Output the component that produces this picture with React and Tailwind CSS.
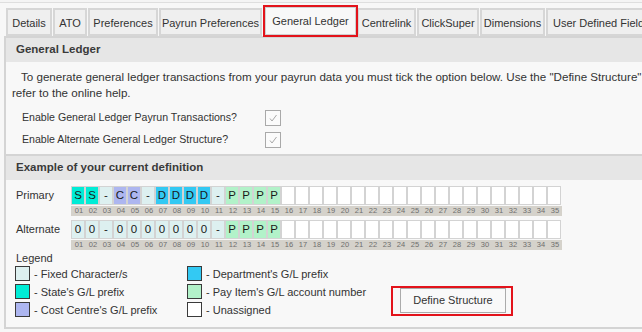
import React from 'react';

const tabs = [
  { label: 'Details', w: 46 },
  { label: 'ATO', w: 34 },
  { label: 'Preferences', w: 70 },
  { label: 'Payrun Preferences', w: 103 },
  { label: 'General Ledger', w: 91, active: true },
  { label: 'Centrelink', w: 59 },
  { label: 'ClickSuper', w: 62 },
  { label: 'Dimensions', w: 65 },
  { label: 'User Defined Fields', w: 120, left: true },
];

const colors = {
  S: 'bg-[#00ecd6]',
  C: 'bg-[#adb6f0]',
  D: 'bg-[#33c9f3]',
  P: 'bg-[#b2f2c9]',
  F: 'bg-[#ddf0f0]',
  U: 'bg-white',
};

const primary = 'SS-CC-DDDD-PPPP'.split('');
const alternate = '00-0000000-PPPP'.split('');

function cellClass(ch, isAlt) {
  if (ch === 'S') return colors.S;
  if (ch === 'C') return colors.C;
  if (ch === 'D') return colors.D;
  if (ch === 'P') return colors.P;
  if (ch === '-' || (isAlt && ch === '0')) return colors.F;
  return colors.U;
}

function Strip({ chars, isAlt }) {
  const cells = Array.from({ length: 35 }, (_, i) => chars[i] || '');
  return (
    <div className="flex flex-col">
      <div className="flex gap-[2px] bg-[#d3d3d3] p-[1px] w-[490px]">
        {cells.map((ch, i) => (
          <div
            key={i}
            className={`w-[12px] h-[17px] flex items-center justify-center text-[11.5px] leading-none text-[#1a1a1a] ${cellClass(ch, isAlt)}`}
          >
            {ch}
          </div>
        ))}
      </div>
      <div className="flex mt-[1px] h-[10px] w-[491px] bg-[#d5d2cb] pl-[1px]">
        {cells.map((_, i) => (
          <div key={i} className="w-[14px] text-center text-[7.5px] leading-[10px] text-[#6e6e6e]">
            {String(i + 1).padStart(2, '0')}
          </div>
        ))}
      </div>
    </div>
  );
}

function Check() {
  return (
    <div className="w-[16px] h-[16px] border border-[#a9a9a9] bg-[#fbfbfb] flex items-center justify-center">
      <svg width="10" height="10" viewBox="0 0 10 10">
        <path d="M2 5.5 L4 8 L8.5 2" fill="none" stroke="#a8a8a8" strokeWidth="1" />
      </svg>
    </div>
  );
}

function Swatch({ color, label }) {
  return (
    <div className="flex items-center h-[15px]">
      <div className={`w-[15px] h-[15px] border border-[#3a3a3a] ${color}`}></div>
      <span className="ml-[4px] mt-[2px]">- {label}</span>
    </div>
  );
}

export default function App() {
  return (
    <div
      className="w-[642px] h-[332px] overflow-hidden bg-[#f7f7f7] text-[#333] text-[10.6px]"
      style={{ fontFamily: '"Liberation Sans", Arial, sans-serif' }}
    >
      <div className="h-[2px] bg-[#f4f4f4]"></div>
      <div className="h-[1px] bg-[#dedede]"></div>
      {/* tabs */}
      <div className="flex items-start pt-[5px] pl-[6px] h-[33px] whitespace-nowrap">
        {tabs.map((t) =>
          t.active ? (
            <div
              key={t.label}
              style={{ width: t.w }}
              className="-mt-[1px] ml-[2px] mr-[1px] h-[28px] shrink-0 bg-[#f8f8f8] border border-[#d0d0d0] outline-2 outline-[#e3131b] flex items-center justify-center text-[11px] text-[#333] relative z-10"
            >
              {t.label}
            </div>
          ) : (
            <div
              key={t.label}
              style={{ width: t.w }}
              className={`h-[28px] mr-[1px] bg-[#efefef] border-2 border-[#d6d6d6] flex items-center pt-[2px] text-[11px] text-[#333] shrink-0 ${t.left ? 'justify-start pl-[5px]' : 'justify-center'}`}
            >
              {t.label}
            </div>
          )
        )}
      </div>

      {/* panel */}
      <div className="ml-[4px] w-[760px] border-l-2 border-t-2 border-b-2 border-[#d4d4d4] bg-[#f8f8f8]">
        <div className="h-[24px] bg-[#e6e6e6] pl-[10px] flex items-center font-bold text-[11.5px] text-[#3a3a3a]">
          General Ledger
        </div>
        <div className="pt-[7px] pl-[6px] leading-[16px] whitespace-nowrap text-[11.6px]">
          <div className="pl-[9px]">
            To generate general ledger transactions from your payrun data you must tick the option below. Use the "Define Structure" button to set up the structure of your account codes. For further information please
          </div>
          <div>refer to the online help.</div>
        </div>
        <div className="mt-[6px] pl-[16px]">
          <div className="h-[22px] flex items-center">
            <span className="w-[243px]">Enable General Ledger Payrun Transactions?</span>
            <Check />
          </div>
          <div className="h-[22px] flex items-center">
            <span className="w-[243px]">Enable Alternate General Ledger Structure?</span>
            <Check />
          </div>
        </div>

        <div className="mt-[3px] border-t-2 border-[#d4d4d4] h-[26px] bg-[#e6e6e6] pl-[10px] flex items-center font-bold text-[11.5px] text-[#3a3a3a]">
          Example of your current definition
        </div>

        <div className="pt-[6px] pl-[10px]">
          <div className="flex">
            <div className="w-[55px] h-[19px] flex items-center text-[11px]">Primary</div>
            <Strip chars={primary} />
          </div>
          <div className="flex mt-[4px]">
            <div className="w-[55px] h-[19px] flex items-center text-[11px]">Alternate</div>
            <Strip chars={alternate} isAlt />
          </div>
          <div className="mt-[1px] h-[14px] leading-[14px] text-[11px]">Legend</div>
          <div className="flex mt-[1px] pb-[10px] text-[11px]">
            <div className="w-[172px] flex flex-col gap-[3px] -ml-[1px]">
              <Swatch color={colors.F} label="Fixed Character/s" />
              <Swatch color={colors.S} label="State's G/L prefix" />
              <Swatch color={colors.C} label="Cost Centre's G/L prefix" />
            </div>
            <div className="w-[204px] flex flex-col gap-[3px]">
              <Swatch color={colors.D} label="Department's G/L prefix" />
              <Swatch color={colors.P} label="Pay Item's G/L account number" />
              <Swatch color={colors.U} label="Unassigned" />
            </div>
            <div className="self-end mb-[1px] border-2 border-[#e3131b] pl-[7px] pr-[5px] pt-0 pb-[1px]">
              <button className="w-[106px] h-[25px] border border-[#ababab] bg-[#f9f9f9] text-[11px] text-[#333]">
                Define Structure
              </button>
            </div>
          </div>
        </div>
      </div>
    </div>
  );
}
